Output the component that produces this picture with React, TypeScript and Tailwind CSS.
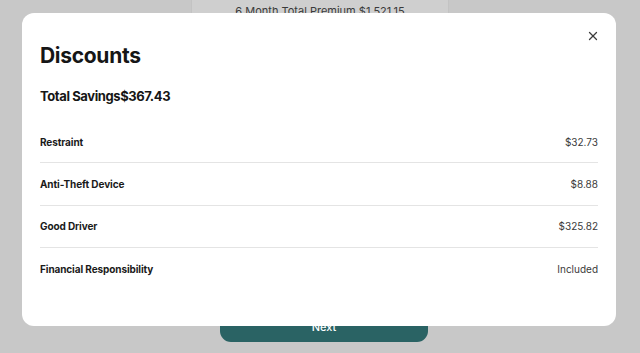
import React from 'react';
import { X } from 'lucide-react';

interface Discount {
  label: string;
  value: string;
}

const discounts: Discount[] = [
  { label: 'Restraint', value: '$32.73' },
  { label: 'Anti-Theft Device', value: '$8.88' },
  { label: 'Good Driver', value: '$325.82' },
  { label: 'Financial Responsibility', value: 'Included' },
];

const App: React.FC = () => {
  return (
    <div
      className="relative w-[640px] h-[353px] overflow-hidden bg-[#c8c8c8]"
      style={{ fontFamily: 'Inter, "Liberation Sans", sans-serif' }}
    >
      {/* Page behind the dimmed overlay */}
      <div className="flex flex-col items-center h-full">
        <div className="w-[258px] h-[40px] bg-[#cfcfcf] border-x border-[#c3c3c3] flex justify-center pt-[4px]">
          <span className="text-[11px] leading-[14px] text-[#3a3a3a]">6 Month Total Premium $1,521.15</span>
        </div>
        <div className="flex-1" />
        <button className="w-[208px] h-[30px] mb-[11px] ml-[8px] rounded-[11px] bg-[#2a6364] text-white text-[11px] font-medium flex items-center justify-center">
          Next
        </button>
      </div>

      {/* Discounts modal */}
      <div className="absolute left-[22px] top-[13px] w-[594px] h-[313px] bg-white rounded-[12px] px-[18px] pt-[30px]">
        <button className="absolute top-[16px] right-[16px] text-[#3d3d3d]">
          <X size={14} strokeWidth={2.25} />
        </button>
        <h2 className="text-[21px] leading-[26px] font-bold text-[#161616] tracking-[-0.3px]">Discounts</h2>
        <p className="mt-[19px] text-[13px] leading-[16px] font-bold text-[#161616] tracking-[-0.4px]">
          Total Savings$367.43
        </p>
        <div className="mt-[17px]">
          {discounts.map((d, i) => (
            <div
              key={d.label}
              className={`flex items-center justify-between h-[42.3px] ${i < discounts.length - 1 ? 'border-b border-[#e4e4e4]' : ''}`}
            >
              <span className="text-[10px] leading-[12px] font-bold text-[#1a1a1a] tracking-[-0.1px]">{d.label}</span>
              <span className="text-[10px] leading-[12px] text-[#3a3a3a]">{d.value}</span>
            </div>
          ))}
        </div>
      </div>
    </div>
  );
};

export default App;
